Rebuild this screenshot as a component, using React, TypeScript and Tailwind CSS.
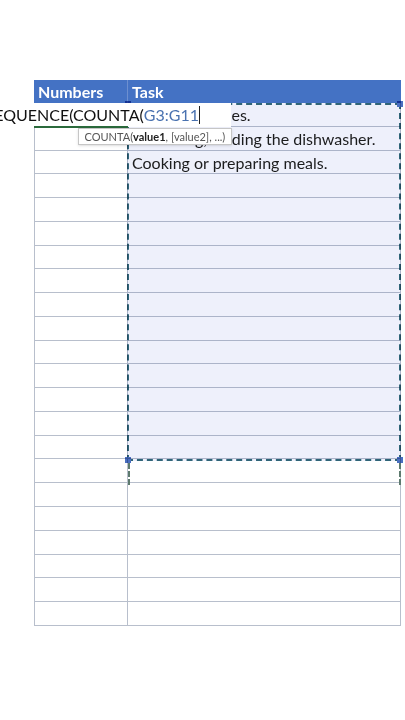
import React from 'react';

const ROWS = 22;
const ROW_H = 23.77;

const tasks: Record<number, string> = {
  0: 'Wash the dishes.',
  1: 'Unloading, loading the dishwasher.',
  2: 'Cooking or preparing meals.',
};

export default function App() {
  return (
    <div
      className="relative w-[405px] h-[720px] bg-white overflow-hidden pt-[80px] pl-[34px]"
      style={{ fontFamily: 'Lato, "Open Sans", sans-serif' }}
    >
      <div className="relative w-[367px]">
        {/* Header */}
        <div className="flex h-[23px] bg-[#4472c4] text-white font-bold text-[16px] leading-[23px]">
          <div className="w-[94px] pl-[4px] border-r border-[#6d8fd0]">Numbers</div>
          <div className="flex-1 pl-[4px]">Task</div>
        </div>

        {/* Body rows */}
        <div className="border-l border-r border-[#b8bfcc]">
          {Array.from({ length: ROWS }).map((_, i) => (
            <div
              key={i}
              className="flex border-b border-[#b8bfcc] text-[16px] text-[#1e1e1e]"
              style={{ height: ROW_H }}
            >
              <div className="w-[93px] border-r border-[#b8bfcc]" />
              <div className="flex-1 pl-[4px] leading-[23px] whitespace-nowrap overflow-hidden">
                {tasks[i] ?? ''}
              </div>
            </div>
          ))}
        </div>

        {/* Selected range highlight */}
        <div className="absolute left-[93px] top-[23px] w-[274px] h-[358px] bg-[#eef0fb] mix-blend-multiply border-2 border-dashed border-[#2f6478] pointer-events-none">
          <div className="absolute -left-[4px] -top-[4px] w-[6px] h-[6px] bg-[#4a6fc0]" />
          <div className="absolute -right-[4px] -top-[4px] w-[6px] h-[6px] bg-[#4a6fc0]" />
          <div className="absolute -left-[4px] -bottom-[4px] w-[6px] h-[6px] bg-[#4a6fc0]" />
          <div className="absolute -right-[4px] -bottom-[4px] w-[6px] h-[6px] bg-[#4a6fc0]" />
        </div>

        {/* Dashed edges continuing below */}
        <div className="absolute left-[94px] top-[383px] w-[273px] h-[22px] border-l-2 border-r-2 border-dashed border-[#5d7a6e] pointer-events-none" />

        {/* In-cell edit box */}
        <div className="absolute -left-[34px] top-[23px] w-[231px] h-[24px] bg-white flex">
          <div className="w-[199px] overflow-hidden flex justify-end whitespace-nowrap text-[16px] leading-[24px] text-[#111]">
            <span>=SEQUENCE(COUNTA(</span>
            <span className="text-[#4a72b0]">G3:G11</span>
          </div>
          <div className="w-[1px] h-[18px] mt-[3px] bg-[#222]" />
        </div>
        <div className="absolute left-0 top-[46px] w-[94px] h-[2px] bg-[#2b6a3c]" />

        {/* Function tooltip */}
        <div className="absolute left-[44px] top-[48px] h-[17px] px-[5.5px] bg-white border border-[#c6c6c6] text-[11px] leading-[15px] text-[#555] whitespace-nowrap shadow-sm">
          COUNTA(<span className="font-bold text-[#222]">value1</span>, [value2], ...)
        </div>
      </div>
    </div>
  );
}
